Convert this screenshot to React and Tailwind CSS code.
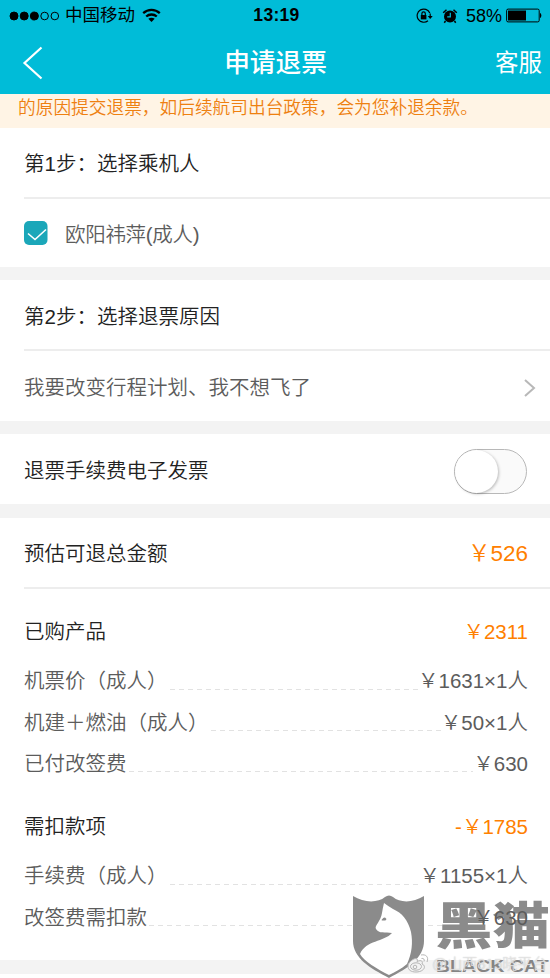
const purchased = [
  { label: '机票价（成人）', value: '￥1631×1人' },
  { label: '机建＋燃油（成人）', value: '￥50×1人' },
  { label: '已付改签费', value: '￥630' }
]

const deductions = [
  { label: '手续费（成人）', value: '￥1155×1人' },
  { label: '改签费需扣款', value: '￥630' }
]

function StatusBar() {
  return (
    <div className="grid h-[31px] grid-cols-[1fr_auto_1fr] items-center pl-[9px] pr-[8px] text-black">
      <div className="flex items-center">
        <svg width="51" height="10" viewBox="0 0 51 10" fill="currentColor" stroke="currentColor">
          <circle cx="5" cy="5" r="4" />
          <circle cx="15.2" cy="5" r="4" />
          <circle cx="25.4" cy="5" r="4" />
          <circle cx="35.6" cy="5" r="3.8" fill="none" />
          <circle cx="45.8" cy="5" r="3.8" fill="none" />
        </svg>
        <span className="ml-[5px] text-[17.5px] leading-none">中国移动</span>
        <svg className="ml-[7px]" width="19" height="15" viewBox="0 0 19 15" fill="none" stroke="currentColor" strokeWidth="2.3">
          <path d="M1.2 5.2C6 .8 13 .8 17.8 5.2M4.2 8.5c3-2.7 7.6-2.7 10.6 0" />
          <path d="M6.3 10.8c1.9-1.5 4.5-1.5 6.4 0L9.5 14z" fill="currentColor" stroke="none" />
        </svg>
      </div>
      <span className="ml-[2px] text-[17.5px] font-bold leading-none tracking-[0.3px]">13:19</span>
      <div className="flex items-center justify-end">
        <svg width="17" height="16" viewBox="0 0 17 16" fill="none" stroke="currentColor" strokeWidth="1.2">
          <path d="M13.8 5A6.6 6.6 0 1 0 12 12.7M14.2 5.5v3.5" />
          <path d="M11.7 8h5l-2.5 3z" fill="currentColor" stroke="none" />
          <rect x="4.8" y="7" width="5.6" height="4.4" fill="currentColor" stroke="none" />
          <path d="M5.9 7V5.6a1.7 1.7 0 0 1 3.4 0V7" />
        </svg>
        <svg className="ml-[9px]" width="16" height="16" viewBox="0 0 16 16">
          <circle cx="8" cy="8.5" r="6" fill="currentColor" />
          <path d="M1.2 4.8L4.5 1.8M14.8 4.8l-3.3-3M3.5 13l-1.2 1.7M12.5 13l1.2 1.7" stroke="currentColor" strokeWidth="1.5" />
          <path d="M8.3 4.8v4H5.2" fill="none" stroke="#00bcd8" strokeWidth="1.2" />
        </svg>
        <span className="ml-[8px] text-[18px] leading-none">58%</span>
        <svg className="ml-[4px]" width="36" height="15" viewBox="0 0 36 15">
          <rect x=".6" y="1.1" width="32.6" height="12.8" rx="1.5" fill="none" stroke="currentColor" />
          <rect x="2" y="2.5" width="18" height="10" fill="currentColor" />
          <path d="M34 5c1.8.5 1.8 4.5 0 5z" fill="currentColor" />
        </svg>
      </div>
    </div>
  )
}

function NavBar() {
  return (
    <div className="grid h-[63px] grid-cols-[1fr_auto_1fr] items-center pl-[22px] pr-[8px] text-white">
      <svg width="21" height="34" viewBox="0 0 21 34" fill="none" stroke="currentColor" strokeWidth="2.2">
        <path d="M19.5 1.5L2.5 17l17 15.5" />
      </svg>
      <h1 className="mr-[13px] mt-[2px] text-[25.7px] font-medium leading-none">申请退票</h1>
      <span className="mt-[3px] justify-self-end text-[23.5px] leading-none">客服</span>
    </div>
  )
}

function Section({ title, amount, height, children }) {
  return (
    <div>
      <div className={`flex items-center justify-between pr-[22px] text-[#222] ${height}`}>
        <span>{title}</span>
        <span className="text-[#ff8000]">{amount}</span>
      </div>
      {children}
    </div>
  )
}

function Row({ label, value }) {
  return (
    <div className="flex h-[41.3px] items-center pr-[22px] pt-[2px] text-[#5c5c5c]">
      <span>{label}</span>
      <svg className="mt-[15px] h-px min-w-0 flex-1" preserveAspectRatio="none">
        <line x1="2" y1=".5" x2="100%" y2=".5" stroke="#e2e2e2" strokeDasharray="5 4" />
      </svg>
      <span className="relative z-10">{value}</span>
    </div>
  )
}

function Watermark() {
  return (
    <div className="pointer-events-none absolute left-[352px] top-[893px] h-[85px] w-[198px]">
      <svg className="absolute left-0 top-0" width="74" height="85" viewBox="0 0 74 85">
        <path d="M1 3C12 10 26 10 33 4Q37 1 41 4C48 10 61 10 72 3V48C72 65 56 75 37 85C18 75 1 65 1 48Z" fill="#8b8b8b" />
        <path d="M32 10Q36 13 41 16C50 20 56 27 59 39C61 50 60 60 55 71C49 76 43 79 37 82C25 76 12 68 8 61C14 47 32 49 40 40C33 39 27 41 24 36C22 33 29 28 30 20Q31 14 32 10Z" fill="#fff" />
        <path d="M29.5 27q3-4 4.5-1.5t-4 2z" fill="#8b8b8b" />
      </svg>
      <div className="absolute left-[83px] top-[9px] origin-left scale-x-[1.15] whitespace-nowrap text-[50px] font-black leading-[50px] text-[#8b8b8b]">黑猫</div>
      <div className="absolute left-[84px] top-[66px] origin-left scale-x-[1.15] whitespace-nowrap text-[17px] font-black leading-[16px] text-[#858585]">BLACK CAT</div>
      <div className="absolute left-[55px] top-[60px] flex items-center whitespace-nowrap text-[15px] leading-[20px] text-white/50 [text-shadow:0_0_1px_#bbb]">
        <svg className="mr-[2px]" width="23" height="21" viewBox="0 0 23 21" fill="#f3f3f3" stroke="#b5b5b5">
          <path d="M1 13C1 9 8 4 10 6q1 1 0 2.5c5-2 6 0 5 2.5C20 13 17 19 9 19C4 19 1 17 1 13Z" />
          <ellipse cx="9" cy="13.5" rx="5.5" ry="3.7" />
          <circle cx="8" cy="14" r="1.8" />
          <path d="M14 2c5-1 8 2 6 7M14.5 5.5c2-.5 3.5 1 2.5 3" fill="none" />
        </svg>
        @山西815晓平台
      </div>
    </div>
  )
}

export default function App() {
  return (
    <div className="relative h-[978px] w-[550px] overflow-hidden bg-[#f3f3f3] font-['Liberation_Sans','Noto_Sans_CJK_SC',sans-serif] text-[20.5px] font-[350] leading-none">
      <header className="bg-[#00bcd8] font-normal">
        <StatusBar />
        <NavBar />
      </header>

      <div className="h-[34px] bg-[#fff4e5] pl-[18px] pt-[5px] text-[17.7px] leading-[18px] text-[#ee8010]">
        的原因提交退票，如后续航司出台政策，会为您补退余款。
      </div>

      <section className="h-[138.5px] bg-white pl-[24px]">
        <Section title="第1步：选择乘机人" height="h-[69px] pt-[4px]" />
        <div className="flex h-[70px] items-center border-t-2 border-[#ededed] text-[#5c5c5c]">
          <svg width="24" height="24" viewBox="0 0 24 24" fill="none">
            <rect width="23.5" height="24" rx="5" fill="#1ba7b9" />
            <path d="M4 12.5l7 6L22 8.5" stroke="#fff" strokeWidth="1.6" />
          </svg>
          <span className="ml-[17px] mt-[4px] tracking-[-0.3px]">欧阳祎萍(成人)</span>
        </div>
      </section>

      <section className="mt-[13.5px] h-[140.5px] bg-white pl-[24px]">
        <Section title="第2步：选择退票原因" height="h-[69px] pt-[5px]" />
        <div className="flex h-[71px] items-center justify-between border-t-2 border-[#ededed] pr-[14px] pt-[4px] text-[#5c5c5c]">
          <span className="mt-[2px]">我要改变行程计划、我不想飞了</span>
          <svg width="13" height="20" viewBox="0 0 13 20" fill="none" stroke="#b8b8b8" strokeWidth="2">
            <path d="M2 2l9 8-9 8" />
          </svg>
        </div>
      </section>

      <section className="mt-[13.5px] flex h-[70px] items-center justify-between bg-white pl-[24px] pr-[23px] text-[#222]">
        <span className="mt-[4px]">退票手续费电子发票</span>
        <div className="mt-[4px] h-[45px] w-[73px] rounded-full border-[1.5px] border-[#b8b8b8] bg-[#fafafa]">
          <div className="h-[43px] w-[43px] rounded-full bg-white shadow-[1px_1px_3px_rgba(0,0,0,0.25)]" />
        </div>
      </section>

      <section className="mt-[14px] h-[442px] bg-white pl-[24px]">
        <div className="flex h-[69px] items-center justify-between pr-[22px] pt-[4px] text-[#222]">
          <span>预估可退总金额</span>
          <span className="text-[22.5px] text-[#ff8000]">￥526</span>
        </div>
        <div className="border-t-2 border-[#ededed] pt-[16px]">
          <Section title="已购产品" amount="￥2311" height="h-[55px]">
            {purchased.map((row) => <Row key={row.label} {...row} />)}
          </Section>
          <div className="mt-[15px]">
            <Section title="需扣款项" amount="-￥1785" height="h-[56px]">
              {deductions.map((row) => <Row key={row.label} {...row} />)}
            </Section>
          </div>
        </div>
      </section>
      <div className="mt-[14px] h-[5px] bg-white" />
      <Watermark />
    </div>
  )
}
